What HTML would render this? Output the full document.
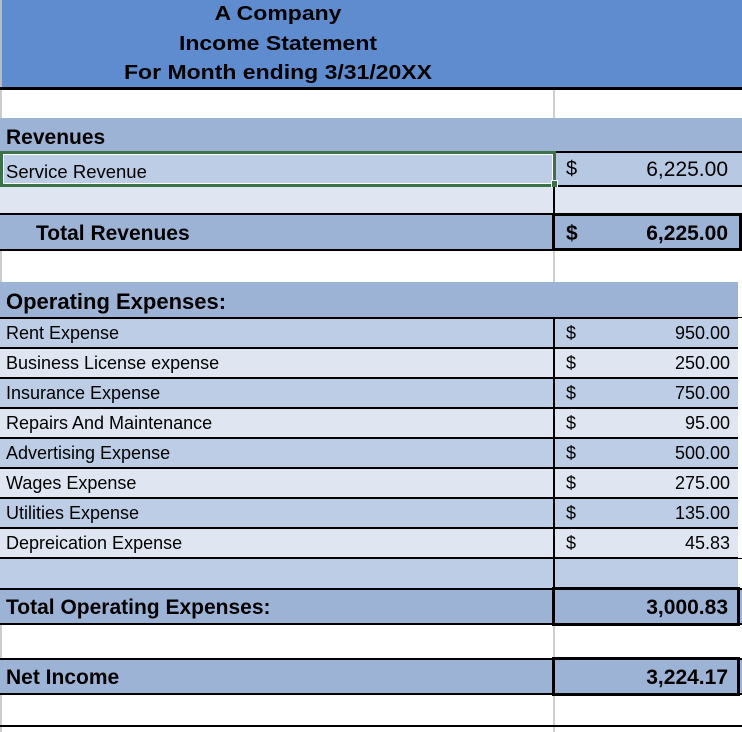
<!DOCTYPE html>
<html><head><style>
body{margin:0;width:742px;height:732px;position:relative;overflow:hidden;background:#fff;font-family:"Liberation Sans",sans-serif;}
div{position:absolute;box-sizing:border-box;}
.t{font-size:18px;color:#000;white-space:nowrap;}
.b{font-weight:bold;}
.h{font-weight:bold;font-size:20px;left:0;width:556px;text-align:center;transform:scaleX(1.15);transform-origin:278px 0;}
</style></head><body>
<div style="left:0;top:0;width:742px;height:88px;background:#5f8bcf;border-left:2px solid #bbb"></div>
<div class="t h" style="top:3px">A Company</div>
<div class="t h" style="top:33px">Income Statement</div>
<div class="t h" style="top:62px">For Month ending 3/31/20XX</div>
<div style="left:0;top:87px;width:742px;height:3px;background:#000"></div>
<div style="left:0;top:90px;width:2px;height:642px;background:#ccc"></div>
<div style="left:553px;top:90px;width:2px;height:642px;background:#d0d0d0"></div>

<div style="left:0;top:118px;width:742px;height:34px;background:#9db3d6"></div>
<div class="t b" style="left:6px;top:126px;font-size:21px">Revenues</div>

<div style="left:0;top:152px;width:742px;height:34px;background:#bccde5"></div>
<div style="left:555px;top:152px;width:187px;height:34px;background:#b6c8e2"></div>
<div style="left:0;top:151px;width:742px;height:2px;background:#000"></div>
<div style="left:0;top:185px;width:742px;height:2px;background:#000"></div>
<div style="left:0;top:151px;width:556px;height:36px;border:3px solid #3b7248"></div>
<div style="left:3px;top:154px;width:550px;height:30px;border:1px solid #fff"></div>
<div style="left:551px;top:180px;width:7px;height:8px;background:#3b7248;border:1px solid #fff"></div>
<div class="t" style="left:6px;top:161px;font-size:18.5px">Service Revenue</div>
<div class="t" style="left:566px;top:158px;font-size:20px">$</div>
<div class="t" style="right:14px;top:158px;font-size:21px">6,225.00</div>

<div style="left:0;top:187px;width:742px;height:26px;background:#dfe6f1"></div>
<div style="left:553px;top:187px;width:2px;height:26px;background:#000"></div>

<div style="left:0;top:213px;width:742px;height:38px;background:#9db3d6;border-top:2px solid #000;border-bottom:2px solid #000"></div>
<div style="left:552px;top:213px;width:190px;height:38px;border:3px solid #000"></div>
<div class="t b" style="left:36px;top:222px;font-size:21px">Total Revenues</div>
<div class="t b" style="left:566px;top:222px;font-size:21px">$</div>
<div class="t b" style="right:14px;top:222px;font-size:21px">6,225.00</div>

<div style="left:0;top:282px;width:742px;height:36px;background:#9db3d6"></div>
<div style="left:738px;top:282px;width:4px;height:36px;background:#fff"></div>
<div class="t b" style="left:6px;top:289px;font-size:22px">Operating Expenses:</div>

<div style="left:0;top:318px;width:742px;height:30px;background:#bccde5"></div>
<div style="left:0;top:348px;width:742px;height:30px;background:#dfe6f1"></div>
<div style="left:0;top:378px;width:742px;height:30px;background:#bccde5"></div>
<div style="left:0;top:408px;width:742px;height:30px;background:#dfe6f1"></div>
<div style="left:0;top:438px;width:742px;height:30px;background:#bccde5"></div>
<div style="left:0;top:468px;width:742px;height:30px;background:#dfe6f1"></div>
<div style="left:0;top:498px;width:742px;height:30px;background:#bccde5"></div>
<div style="left:0;top:528px;width:742px;height:30px;background:#dfe6f1"></div>
<div style="left:0;top:317px;width:742px;height:2px;background:#000"></div>
<div style="left:0;top:347px;width:742px;height:2px;background:#000"></div>
<div style="left:0;top:377px;width:742px;height:2px;background:#000"></div>
<div style="left:0;top:407px;width:742px;height:2px;background:#000"></div>
<div style="left:0;top:437px;width:742px;height:2px;background:#000"></div>
<div style="left:0;top:467px;width:742px;height:2px;background:#000"></div>
<div style="left:0;top:497px;width:742px;height:2px;background:#000"></div>
<div style="left:0;top:527px;width:742px;height:2px;background:#000"></div>
<div style="left:0;top:557px;width:742px;height:2px;background:#000"></div>
<div style="left:553px;top:318px;width:2px;height:240px;background:#000"></div>
<div style="left:738px;top:318px;width:4px;height:240px;background:#fff"></div>

<div class="t" style="left:6px;top:323px">Rent Expense</div>
<div class="t" style="left:6px;top:353px">Business License expense</div>
<div class="t" style="left:6px;top:383px">Insurance Expense</div>
<div class="t" style="left:6px;top:413px">Repairs And Maintenance</div>
<div class="t" style="left:6px;top:443px">Advertising Expense</div>
<div class="t" style="left:6px;top:473px">Wages Expense</div>
<div class="t" style="left:6px;top:503px">Utilities Expense</div>
<div class="t" style="left:6px;top:533px">Depreication Expense</div>
<div class="t" style="left:566px;top:323px">$</div>
<div class="t" style="left:566px;top:353px">$</div>
<div class="t" style="left:566px;top:383px">$</div>
<div class="t" style="left:566px;top:413px">$</div>
<div class="t" style="left:566px;top:443px">$</div>
<div class="t" style="left:566px;top:473px">$</div>
<div class="t" style="left:566px;top:503px">$</div>
<div class="t" style="left:566px;top:533px">$</div>
<div class="t" style="right:12px;top:323px">950.00</div>
<div class="t" style="right:12px;top:353px">250.00</div>
<div class="t" style="right:12px;top:383px">750.00</div>
<div class="t" style="right:12px;top:413px">95.00</div>
<div class="t" style="right:12px;top:443px">500.00</div>
<div class="t" style="right:12px;top:473px">275.00</div>
<div class="t" style="right:12px;top:503px">135.00</div>
<div class="t" style="right:12px;top:533px">45.83</div>

<div style="left:0;top:559px;width:742px;height:29px;background:#bccde5"></div>
<div style="left:738px;top:559px;width:4px;height:29px;background:#fff"></div>
<div style="left:553px;top:559px;width:2px;height:29px;background:#000"></div>

<div style="left:0;top:588px;width:742px;height:37px;background:#9db3d6;border-top:2px solid #000;border-bottom:2px solid #000"></div>
<div style="left:552px;top:587px;width:188px;height:39px;border:3px solid #000"></div>
<div class="t b" style="left:6px;top:596px;font-size:21px">Total Operating Expenses:</div>
<div class="t b" style="right:14px;top:596px;font-size:21px">3,000.83</div>

<div style="left:0;top:658px;width:742px;height:37px;background:#9db3d6;border-top:2px solid #000;border-bottom:2px solid #000"></div>
<div style="left:552px;top:657px;width:188px;height:39px;border:3px solid #000"></div>
<div class="t b" style="left:6px;top:666px;font-size:21px">Net Income</div>
<div class="t b" style="right:14px;top:666px;font-size:21px">3,224.17</div>

<div style="left:0;top:725px;width:742px;height:2px;background:#000"></div>
</body></html>
